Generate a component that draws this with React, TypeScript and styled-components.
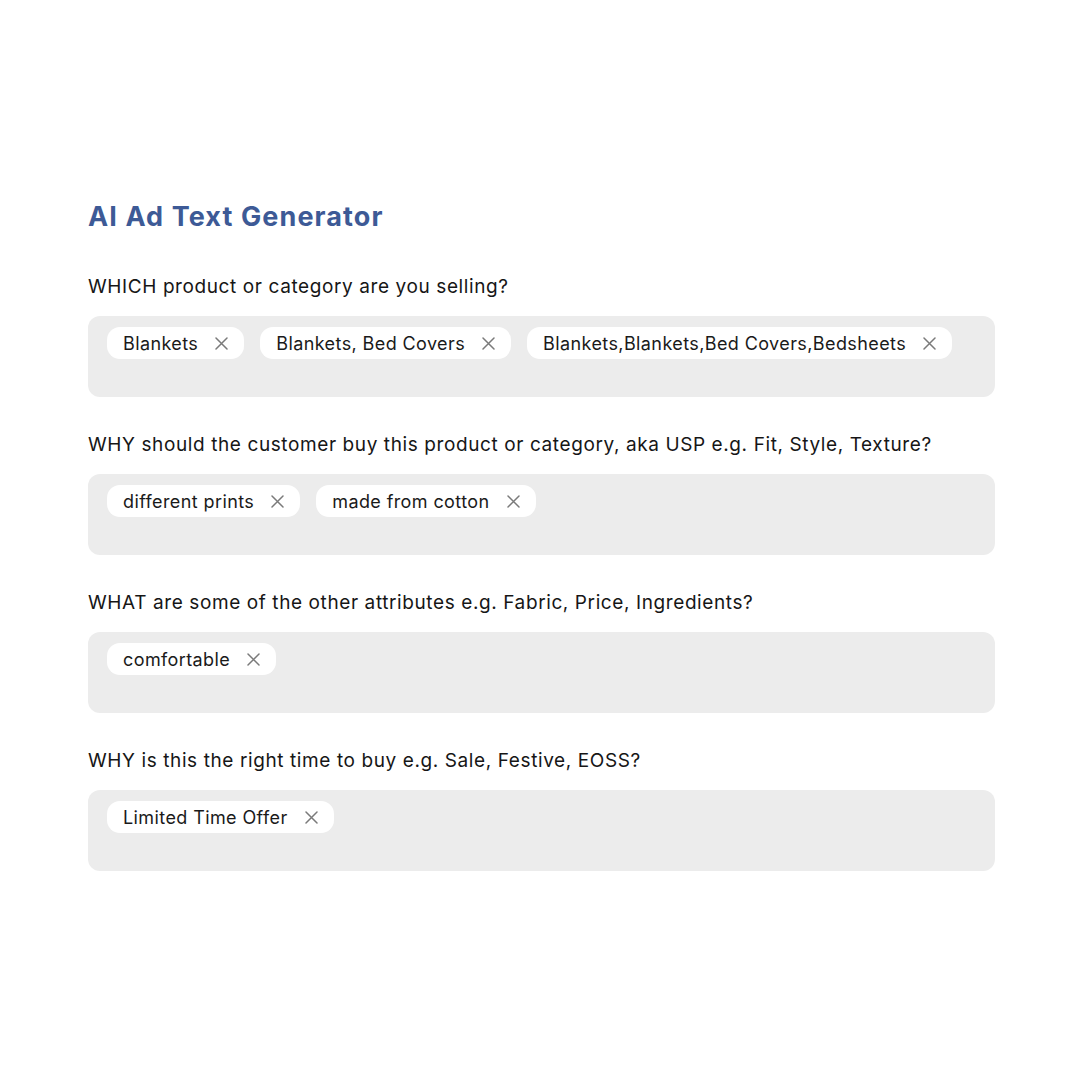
import React from "react";
import styled, { createGlobalStyle } from "styled-components";

const Global = createGlobalStyle`
  html, body { margin: 0; padding: 0; background: #ffffff; }
  body { font-family: "Inter", "Open Sans", sans-serif; }
`;

const Page = styled.div`
  width: 1080px;
  height: 1080px;
  box-sizing: border-box;
  padding: 199px 85px 0 88px;
  display: flex;
  flex-direction: column;
`;

const Title = styled.h1`
  margin: 0 0 40px 0;
  font-size: 27px;
  font-weight: 700;
  color: #3d5a96;
  letter-spacing: 1.1px;
  line-height: 36px;
`;

const Section = styled.section`
  display: flex;
  flex-direction: column;
  margin-bottom: 36px;
`;

const Label = styled.div`
  font-size: 19px;
  color: #161616;
  line-height: 24px;
  letter-spacing: 0.6px;
  margin-bottom: 17px;
`;

const Box = styled.div`
  height: 81px;
  box-sizing: border-box;
  background: #ececec;
  border-radius: 12px;
  padding: 11px 19px;
  display: flex;
  flex-wrap: wrap;
  align-content: flex-start;
  gap: 16px;
`;

const Chip = styled.div`
  height: 32px;
  box-sizing: border-box;
  background: #ffffff;
  border-radius: 13px;
  padding: 0 16px 0 16px;
  display: inline-flex;
  align-items: center;
  gap: 17px;
  font-size: 18px;
  letter-spacing: 0.4px;
  color: #1a1a1a;
`;

const Close = styled.svg`
  width: 13px;
  height: 13px;
  flex: none;
`;

const X = () => (
  <Close viewBox="0 0 13 13">
    <path d="M1 1 L12 12 M12 1 L1 12" stroke="#7a7a7a" strokeWidth="1.5" strokeLinecap="round" />
  </Close>
);

const sections = [
  {
    q: "WHICH product or category are you selling?",
    tags: ["Blankets", "Blankets, Bed Covers", "Blankets,Blankets,Bed Covers,Bedsheets"],
  },
  {
    q: "WHY should the customer buy this product or category, aka USP e.g. Fit, Style, Texture?",
    tags: ["different prints", "made from cotton"],
  },
  {
    q: "WHAT are some of the other attributes e.g. Fabric, Price, Ingredients?",
    tags: ["comfortable"],
  },
  {
    q: "WHY is this the right time to buy e.g. Sale, Festive, EOSS?",
    tags: ["Limited Time Offer"],
  },
];

export default function App() {
  return (
    <>
      <Global />
      <Page>
        <Title>AI Ad Text Generator</Title>
        {sections.map((s) => (
          <Section key={s.q}>
            <Label>{s.q}</Label>
            <Box>
              {s.tags.map((t) => (
                <Chip key={t}>
                  {t}
                  <X />
                </Chip>
              ))}
            </Box>
          </Section>
        ))}
      </Page>
    </>
  );
}
